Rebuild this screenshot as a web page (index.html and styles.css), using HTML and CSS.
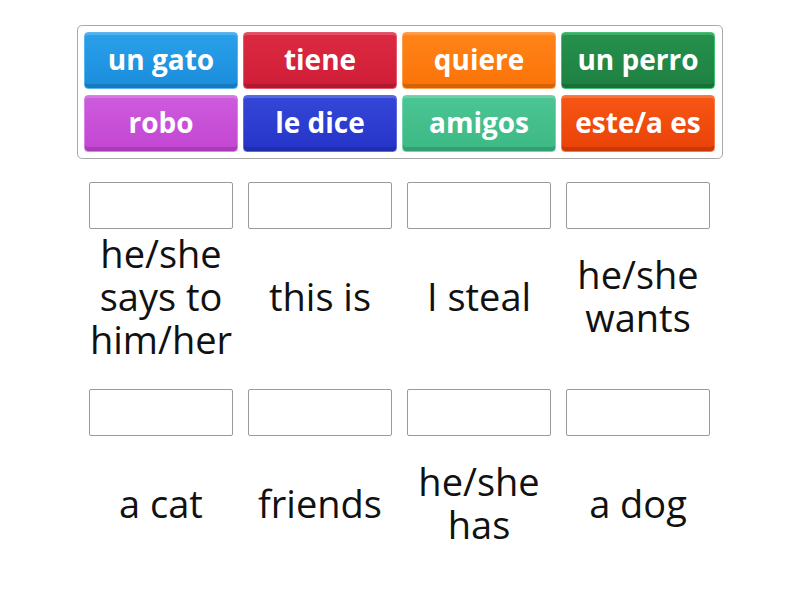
FILE: index.html
```html
<!DOCTYPE html>
<html>
<head>
<meta charset="utf-8">
<link rel="stylesheet" href="styles.css">
</head>
<body>
<div class="page">
  <div class="bank">
    <div class="tile c-blue">un gato</div>
    <div class="tile c-red">tiene</div>
    <div class="tile c-orange">quiere</div>
    <div class="tile c-green">un perro</div>
    <div class="tile c-purple">robo</div>
    <div class="tile c-navy">le dice</div>
    <div class="tile c-teal">amigos</div>
    <div class="tile c-flame">este/a es</div>
  </div>
  <div class="targets">
    <div class="cell"><div class="drop"></div><div class="label">he/she says to him/her</div></div>
    <div class="cell"><div class="drop"></div><div class="label">this is</div></div>
    <div class="cell"><div class="drop"></div><div class="label">I steal</div></div>
    <div class="cell"><div class="drop"></div><div class="label">he/she wants</div></div>
    <div class="cell"><div class="drop"></div><div class="label">a cat</div></div>
    <div class="cell"><div class="drop"></div><div class="label">friends</div></div>
    <div class="cell"><div class="drop"></div><div class="label">he/she has</div></div>
    <div class="cell"><div class="drop"></div><div class="label">a dog</div></div>
  </div>
</div>
</body>
</html>
```
FILE: styles.css
```css
html, body {
  margin: 0;
  padding: 0;
  background: #fff;
}
body {
  font-family: "Open Sans", "Liberation Sans", sans-serif;
  width: 800px;
  height: 600px;
  overflow: hidden;
}
.page {
  padding-top: 25px;
  padding-left: 77px;
}
.bank {
  box-sizing: border-box;
  width: 646px;
  border: 1px solid #a9a9a9;
  border-radius: 5px;
  padding: 6px;
  display: grid;
  grid-template-columns: repeat(4, 154px);
  grid-auto-rows: 57px;
  column-gap: 5px;
  row-gap: 6px;
}
.tile {
  box-sizing: border-box;
  border-radius: 4px;
  color: #fff;
  font-weight: 700;
  font-size: 28px;
  display: flex;
  align-items: center;
  justify-content: center;
  padding-bottom: 4px;
  border: 1px solid rgba(255,255,255,0.18);
  box-shadow: inset 0 -4px 0 rgba(0,0,0,0.14), inset 0 2px 0 rgba(255,255,255,0.18);
}
.c-blue { background: linear-gradient(#2aa0ea, #1a8ddb); border-color: #5ab6f0; }
.c-red { background: linear-gradient(#dc2a42, #cf1d37); border-color: #e6556a; }
.c-orange { background: linear-gradient(#ff8418, #fb7308); border-color: #ffa050; }
.c-green { background: linear-gradient(#25914c, #1e8043); border-color: #3cc46d; }
.c-purple { background: linear-gradient(#cd5cdc, #c345d3); border-color: #da82e6; }
.c-navy { background: linear-gradient(#3447d8, #2534c8); border-color: #5a6ae0; }
.c-teal { background: linear-gradient(#4cc594, #3cb984); border-color: #74d4ab; }
.c-flame { background: linear-gradient(#f65614, #ea4208); border-color: #fa7a45; }

.targets {
  margin-top: 23px;
  margin-left: 12px;
  display: grid;
  grid-template-columns: repeat(4, 144px);
  column-gap: 15px;
  row-gap: 24px;
}
.cell {
  display: flex;
  flex-direction: column;
}
.drop {
  box-sizing: border-box;
  height: 47px;
  border: 1px solid #9a9a9a;
  border-radius: 2px;
  background: #fff;
}
.label {
  height: 136px;
  display: flex;
  align-items: center;
  justify-content: center;
  text-align: center;
  font-size: 38px;
  line-height: 43px;
  color: #111;
  margin: 0 -8px;
  padding-bottom: 2px;
  box-sizing: border-box;
}
```
